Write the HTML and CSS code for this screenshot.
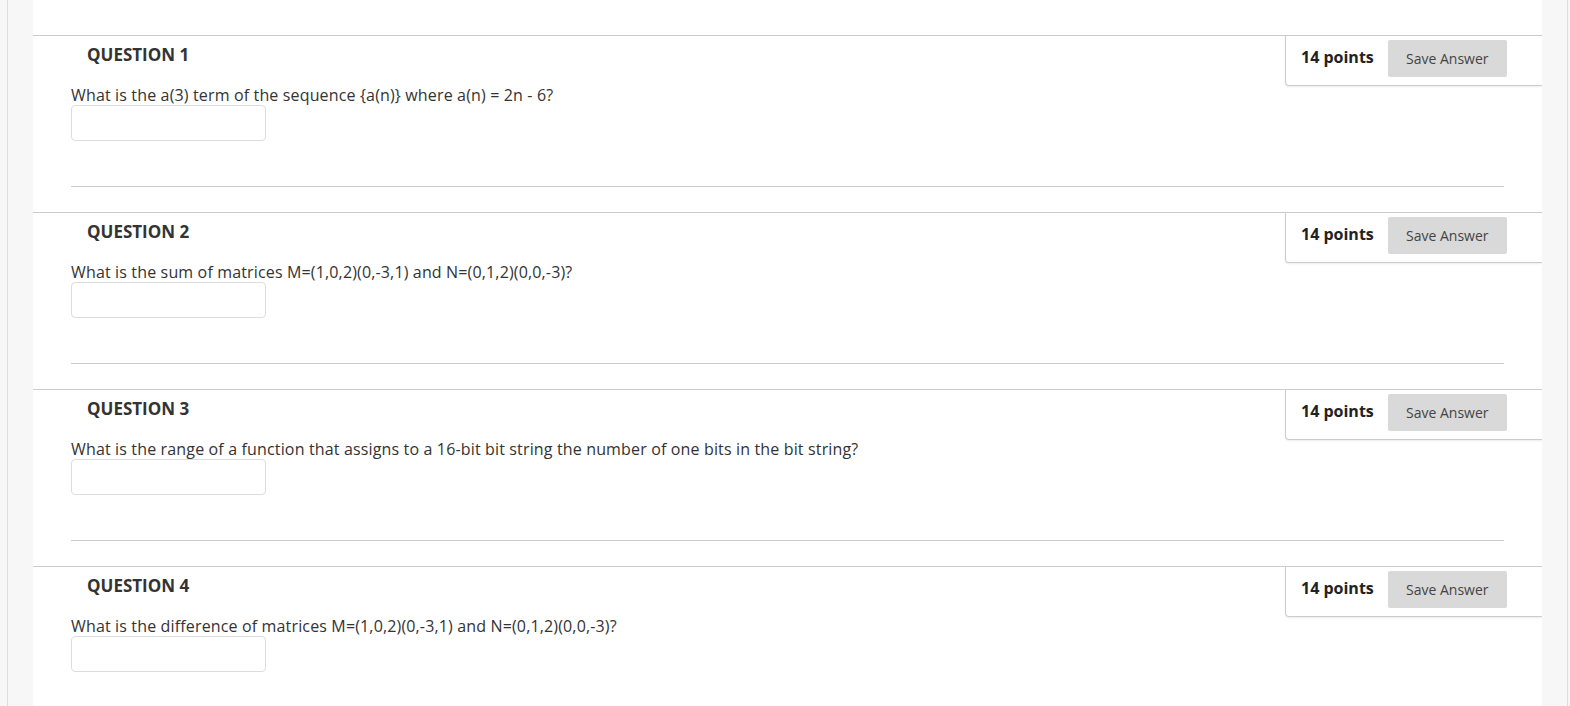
FILE: index.html
```html
<!DOCTYPE html>
<html lang="en">

<head>
    <meta charset="UTF-8">
    <meta name="viewport" content="width=device-width, initial-scale=1.0">
    <title>Test</title>
    <link rel="stylesheet" href="styles.css">
</head>

<body>
    <div class="page">
        <div class="rail-left"></div>
        <div class="content">
            <div class="question">
                <div class="q-head">
                    <h3 class="q-title">QUESTION 1</h3>
                    <div class="points-box">
                        <span class="points">14 points</span>
                        <button class="save-button">Save Answer</button>
                    </div>
                </div>
                <div class="q-text">What is the a(3) term of the sequence {a(n)} where a(n) = 2n - 6?</div>
                <input type="text" class="answer">
                <hr class="separator">
            </div>
            <div class="question">
                <div class="q-head">
                    <h3 class="q-title">QUESTION 2</h3>
                    <div class="points-box">
                        <span class="points">14 points</span>
                        <button class="save-button">Save Answer</button>
                    </div>
                </div>
                <div class="q-text">What is the sum of matrices M=(1,0,2)(0,-3,1) and N=(0,1,2)(0,0,-3)?</div>
                <input type="text" class="answer">
                <hr class="separator">
            </div>
            <div class="question">
                <div class="q-head">
                    <h3 class="q-title">QUESTION 3</h3>
                    <div class="points-box">
                        <span class="points">14 points</span>
                        <button class="save-button">Save Answer</button>
                    </div>
                </div>
                <div class="q-text">What is the range of a function that assigns to a 16-bit bit string the number of one bits in the bit string?</div>
                <input type="text" class="answer">
                <hr class="separator">
            </div>
            <div class="question">
                <div class="q-head">
                    <h3 class="q-title">QUESTION 4</h3>
                    <div class="points-box">
                        <span class="points">14 points</span>
                        <button class="save-button">Save Answer</button>
                    </div>
                </div>
                <div class="q-text">What is the difference of matrices M=(1,0,2)(0,-3,1) and N=(0,1,2)(0,0,-3)?</div>
                <input type="text" class="answer">
                <hr class="separator">
            </div>
        </div>
        <div class="rail-right"></div>
    </div>
</body>

</html>
```

FILE: styles.css
```css
body {
    margin: 0;
    height: 100vh;
    overflow: hidden;
    background-color: #f7f7f7;
    font-family: "Open Sans", Arial, sans-serif;
    color: #333;
}

.page {
    display: flex;
    min-height: 100vh;
}

.rail-left {
    width: 25px;
    margin-left: 7px;
    border-left: 1px solid #ddd;
    background-color: #f7f7f7;
}

.rail-right {
    width: 25px;
    margin-right: 2px;
    border-right: 1px solid #ddd;
    background-color: #f7f7f7;
}

.content {
    flex: 1;
    background-color: #fff;
    padding-top: 35px;
}

.question {
    border-top: 1px solid #ccc;
    padding: 0 38px 25px;
}

.q-head {
    display: flex;
    justify-content: space-between;
    align-items: flex-start;
    margin-right: -38px;
}

.q-title {
    margin: 0;
    padding: 7px 0 0 16px;
    font-size: 17px;
    font-weight: bold;
    color: #333;
}

.points-box {
    width: 204px;
    display: flex;
    align-items: center;
    gap: 14px;
    padding: 4px 37px 8px 15px;
    border-left: 1px solid #ccc;
    border-bottom: 1px solid #ccc;
    border-bottom-left-radius: 4px;
    box-shadow: 0 1px 2px rgba(0, 0, 0, 0.08);
}

.points {
    flex-shrink: 0;
    white-space: nowrap;
    margin-bottom: 3px;
    font-size: 16px;
    font-weight: bold;
    color: #222;
}

.save-button {
    flex-shrink: 0;
    width: 119px;
    height: 37px;
    font-family: "Open Sans", Arial, sans-serif;
    font-size: 14px;
    color: #444;
    background-color: #d9d9d9;
    border: none;
    border-radius: 2px;
    cursor: pointer;
}

.q-text {
    font-size: 16px;
    line-height: 19px;
    letter-spacing: 0.15px;
}

.answer {
    display: block;
    box-sizing: border-box;
    width: 195px;
    height: 36px;
    margin: 0;
    border: 1px solid #ddd;
    border-radius: 4px;
}

.separator {
    margin: 45px 0 0;
    border: none;
    border-top: 1px solid #ccc;
}
```
